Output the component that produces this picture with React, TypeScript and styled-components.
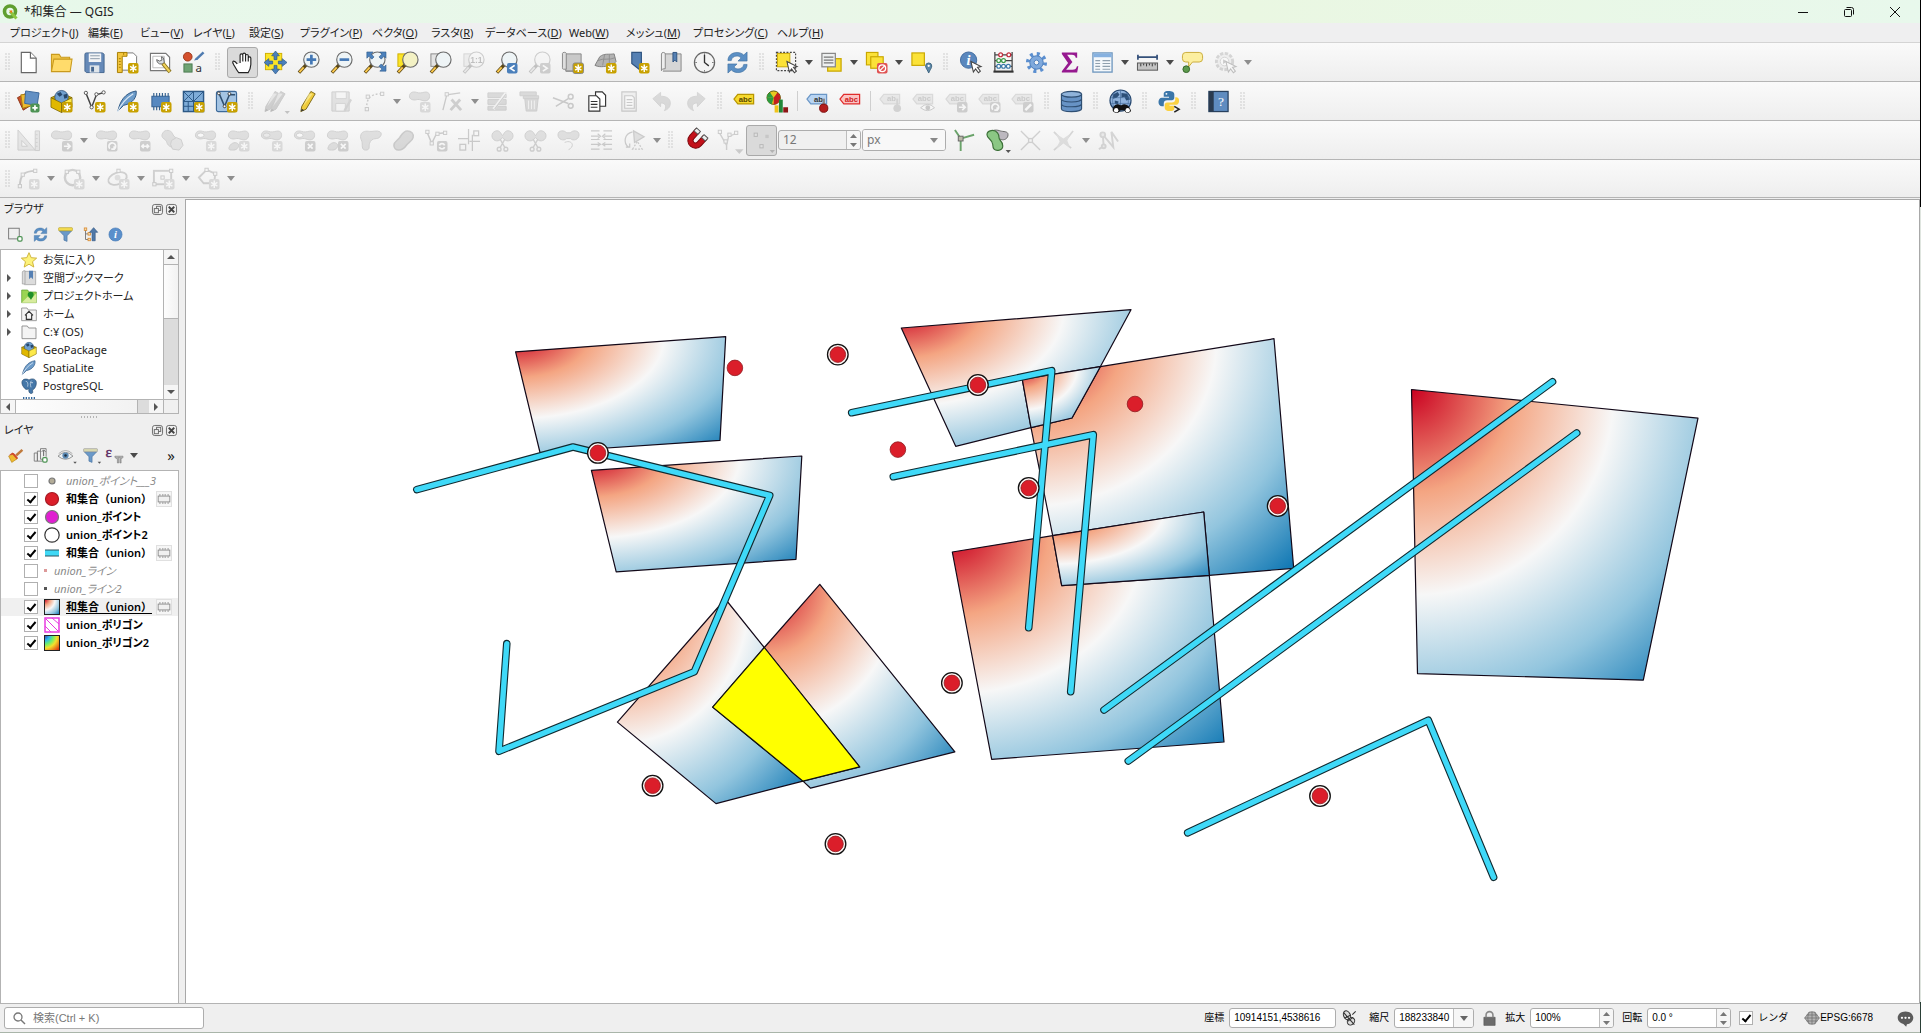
import React, { ReactNode } from "react";
import styled, { createGlobalStyle, css } from "styled-components";

const Global = createGlobalStyle`
  *, *::before, *::after { box-sizing: border-box; }
  body { margin: 0; overflow: hidden; }
  button, input, select { font: inherit; color: inherit; margin: 0; }
`;

/* ---------- icon building blocks ---------- */
const Svg = styled.svg`
  display: block;
  flex: none;
  overflow: visible;
`;

const blob = "M1.500 6C2 2 6 1.500 9 2.500s5 .5 8-.2S23 3 22.500 7s-4 5-7 4-4.500-1.500-7-.8S1 10 1.500 6z";
const Blob = ({ fill = "#a8a8a8" }: { fill?: string }) => <path d={blob} fill={fill} stroke="#777" strokeWidth="1" />;

const Star = () => (
  <g>
    <rect x="12.500" y="12.500" width="11" height="11" rx="2" fill="#c8a100" />
    <path d="M18 14.200v7.600M14.700 16.100l6.600 3.800M21.300 16.100l-6.600 3.800" stroke="#fff" strokeWidth="1.500" />
  </g>
);
const Badge = ({ fill = "#777", children }: { fill?: string; children: ReactNode }) => (
  <g>
    <rect x="12.500" y="12.500" width="11" height="11" rx="2" fill={fill} />
    <g stroke="#fff" strokeWidth="1.800" fill="none">{children}</g>
  </g>
);
const Lens = ({ fill = "#eef4f6" }: { fill?: string }) => (
  <g>
    <path d="M9.500 14.500L2 22.500" stroke="#5a4717" strokeWidth="3.600" />
    <path d="M7 17L2.500 22" stroke="#fbc94c" strokeWidth="2" />
    <circle cx="15" cy="9" r="8" fill={fill} stroke="#6b6b6b" strokeWidth="1.200" />
  </g>
);
const Mini = ({ x = 22.5 }: { x?: number }) => <path d={`M${x - 2.5} 22h5.500l-2.750 3z`} fill="#555" />;
const Cursor = () => <path d="M12.500 11l2.500 11 2.300-3.300 3 4 2-1.600-3-4 3.700-.900z" fill="#fff" stroke="#444" strokeWidth="1.100" />;
const Tag = ({ fill, stroke, text, ink }: { fill: string; stroke: string; text: string; ink: string }) => (
  <g>
    <path d="M1 9.500L5 4.500h16.500v10H5z" fill={fill} stroke={stroke} strokeWidth="1.300" />
    <text x="13" y="12" textAnchor="middle" fontSize="8" fontWeight="700" fontFamily="Liberation Sans, sans-serif" fill={ink}>{text}</text>
  </g>
);
const Scissors = () => (
  <g fill="none" stroke="#777" strokeWidth="1.400">
    <path d="M9.500 10.500l5 9M14.500 10.500l-5 9" />
    <circle cx="8.500" cy="21" r="2" /><circle cx="15.500" cy="21" r="2" />
  </g>
);
const Refresh = () => (
  <g fill="#5b8fc4" stroke="#36689b" strokeWidth=".6">
    <path d="M2 10c0-5 4-8.500 9.500-8.500 3 0 5.200 1 7 2.700L22 1v9.500h-9.500l3.200-3.200C14.500 6 13.200 5.300 11.500 5.300 8.300 5.300 6 7 5.500 10z" />
    <path d="M22 14c0 5-4 8.500-9.500 8.500-3 0-5.200-1-7-2.700L2 23v-9.500h9.500l-3.200 3.200c1.200 1.300 2.500 2 4.200 2 3.200 0 5.500-1.700 6-4.700z" />
  </g>
);
const Box = () => (
  <g stroke="#7a6400" strokeWidth=".8">
    <path d="M1 8l11-5 11 5-11 6z" fill="#c9a400" />
    <circle cx="12" cy="7.500" r="7" fill="#6f9fce" stroke="#274b75" />
    <path d="M7 4l4-2 2 3-3 2zM14 5l4-1v4l-3 1z" fill="#27476b" stroke="none" />
    <path d="M1 8l11 5.500V23.500L1 18z" fill="#e0b800" /><path d="M23 8l-11 5.500V23.500l11-5.500z" fill="#fde94a" />
  </g>
);
const Feather = () => (
  <g><path d="M2 22C4 12 9 3 21 1c1 6-3 13-13 15z" fill="#6c9bc9" stroke="#2f5883" strokeWidth="1" /><path d="M1.500 23C5 15 10 9 18 4" stroke="#dce9f5" fill="none" strokeWidth="1.200" /></g>
);
const Pencil = ({ fill = "#f0cc3c" }: { fill?: string }) => (
  <g><path d="M5 17L14.500 1.500l4.500 2.500L9.500 20 4 22.500z" fill={fill} stroke="#7d6a1c" strokeWidth="1" /><path d="M12 3.500L6.500 17l10-13z" fill="#fff3a8" opacity=".6" /><path d="M5 19.500l2.500 1.500L4 22.500z" fill="#333" /></g>
);
const Node = ({ x, y }: { x: number; y: number }) => <rect x={x - 1.7} y={y - 1.7} width="3.4" height="3.4" fill="#eee" stroke="#666" strokeWidth="1" />;
const Globe = ({ c = "#7ba5d3" }: { c?: string }) => (
  <g><circle cx="12" cy="11" r="11" fill={c} stroke="#26476f" strokeWidth="1.200" />
    <path d="M4 5l5-3 2 3-3 3-4 1zM13 3l6 1 3 6-4 1-2-4-3 1zM6 11l4 1-1 3-3-1z" fill="#2c4f78" />
    <path d="M2 8h20M2 14h20M12 0v22M6 2c-3 6-3 12 0 18M18 2c3 6 3 12 0 18" stroke="#3d6393" fill="none" strokeWidth=".6" /></g>
);

const icons: Record<string, ReactNode> = {
  new: <g fill="#fff" stroke="#666" strokeWidth="1.200"><path d="M4.500 1.500h9.500l6 6v15H4.500z" /><path d="M14 1.500v6h6" /></g>,
  open: <g stroke="#c99a1d" strokeWidth="1.100"><path d="M1.500 21V3.500h8l2 3h9V10" fill="#f2c84b" /><path d="M1.500 21.500L4 8.500h19l-2 13z" fill="#ffdb6b" /></g>,
  save: <g><path d="M2 3.500Q2 2 3.500 2h17L22 3.500v19H3.500L2 21z" fill="#6589b8" stroke="#45668f" /><rect x="6" y="2.500" width="13" height="9" fill="#f2f4f6" /><path d="M7.500 5h10M7.500 8h10" stroke="#8a99a8" /><rect x="7" y="15" width="10" height="7.500" fill="#dfe5ea" /><rect x="8.500" y="16.500" width="3" height="5" fill="#45668f" /></g>,
  layout: <g><path d="M5 2h13l3.500 3.500V20H5z" fill="#fff" stroke="#777" /><path d="M1.500 1.500h10v4h-5v17h-5z" fill="#f2c53d" stroke="#a67c00" /><path d="M3 8h2M3 11h2M3 14h2M3 17h2M8 2v2" stroke="#a67c00" /><Star /></g>,
  manager: <g><path d="M1.500 2.500h16l4 4v14h-20z" fill="#fff" stroke="#777" strokeWidth="1.200" /><path d="M4 5.500h12v12H4z" fill="none" stroke="#bbb" /><path d="M8 9a4.500 4.500 0 008 3l-1-5-2-1 .5 3.500-2.500 1z" fill="#d9dde0" stroke="#666" /><path d="M14.500 13l7.500 9" stroke="#8a7420" strokeWidth="4" /><path d="M15 13.500l6.500 8" stroke="#f1d35a" strokeWidth="2.200" /></g>,
  style: <g><circle cx="6" cy="6" r="4.500" fill="#d4502d" stroke="#9c3415" /><path d="M15 8.500l7.500-7" stroke="#4f7bb0" strokeWidth="2.600" /><path d="M12.500 10l4-1-2-2z" fill="#4f7bb0" /><rect x="2" y="13.500" width="8.500" height="8.500" fill="#6fa373" stroke="#4b7a50" /><text x="14" y="22" fontSize="12" fontFamily="Noto Sans, sans-serif" fill="#333">a</text></g>,
  pan: <path d="M6.500 13.500c-1.500-2-3-3.500-4.300-2.700-1 .700-.2 2 .5 3.200 1.500 2.700 3 6 5.300 8.500h10c1.500-2.500 2.500-5 2.700-8.500V7.500c0-1.800-2.700-1.800-2.700 0V5c0-1.800-2.800-1.800-2.800 0V3.500c0-1.800-2.900-1.800-2.900 0V4.500c0-1.900-2.800-1.900-2.800 0v8M12.300 4.500v6.500M15.200 4.500V11M18 6.500V11" fill="#fff" stroke="#222" strokeWidth="1.200" />,
  panSel: <g><rect x="1.500" y="2.500" width="17" height="17" fill="#fbe425" stroke="#cfae00" /><path d="M12 0l4 5h-2.500v4h-3V5H8zM12 24l4-5h-2.500v-4h-3v4H8zM0 12l5-4v2.500h4v3H5V16zM24 12l-5-4v2.500h-4v3h4V16z" fill="#4b80bb" stroke="#2b5788" strokeWidth=".7" /></g>,
  zoomIn: <g><Lens /><path d="M15 4v10M10 9h10" stroke="#4478b5" strokeWidth="2.800" /></g>,
  zoomOut: <g><Lens /><path d="M10 9h10" stroke="#4478b5" strokeWidth="2.800" /></g>,
  full: <g><Lens /><g fill="#4b80bb" stroke="#2b5788" strokeWidth=".6"><path d="M4 1h6.500L8.500 3.200l3 3-2.300 2.300-3-3L4 7.500zM24 1h-6.500l2.200 2.200-3 3 2.300 2.300 3-3 2 2zM24 21h-6.500l2.200-2.200-3-3 2.300-2.300 3 3 2-2z" /></g></g>,
  zoomSel: <g><rect x="2" y="3" width="13" height="13" fill="#fbe425" stroke="#cfae00" /><Lens fill="#f3f1c4" /></g>,
  zoomLayer: <g><rect x="2" y="3" width="13" height="13" fill="#e3e3e3" stroke="#888" /><Lens /></g>,
  native: <g><rect x="2" y="3" width="13" height="13" fill="#d8d8d8" stroke="#888" /><Lens /><text x="15" y="12.500" textAnchor="middle" fontSize="9" fontWeight="700" fontFamily="Liberation Sans, sans-serif" fill="#444">1:1</text></g>,
  last: <g><Lens /><Badge fill="#4b80bb"><path d="M20.500 15l-4.500 3 4.500 3" /></Badge></g>,
  next: <g><Lens /><Badge><path d="M15.500 15l4.500 3-4.500 3" /></Badge></g>,
  mapView: <g fill="#c9c9c9" stroke="#888"><path d="M5 3h16v18H5z" /><path d="M1.500 2.500c0-1.500 4-1.500 4 0V19H2.500c-1 0-1-1-1-2z" fill="#dedede" /><path d="M5 21h12" /><Star /></g>,
  view3d: <g><path d="M1 15L6 6c5-4 9-2 15-3l2 8-5 5c-6-1-10 2-17-1z" fill="#b3b3b3" stroke="#808080" /><path d="M4 10c6-3 12 0 18-3M11 4l-2 11M16 4v11" stroke="#909090" fill="none" /><Star /></g>,
  mark: <g><path d="M5 1.500h10V21l-5-4-5-4z" fill="#5580b3" stroke="#2e5380" strokeWidth="1.200" /><Star /></g>,
  marks: <g><path d="M5 3h17v18H3" fill="#d6d6d6" stroke="#888" /><path d="M1.500 3c0-2 4-2 4 0v15.500c-2 0-4 .5-4 2z" fill="#eee" stroke="#888" /><path d="M13.500 1.500h4v10l-2-2-2 2z" fill="#5580b3" stroke="#2e5380" /></g>,
  clock: <g fill="#f4f4f4" stroke="#666"><circle cx="12" cy="12" r="10.500" strokeWidth="1.300" /><path d="M12 4v8l4.500 3.500" fill="none" stroke="#333" strokeWidth="1.400" /><path d="M12 2.500v1.500M12 20v1.500M2.500 12H4M20 12h1.500" /></g>,
  refresh: <Refresh />,
  select: <g><rect x="1.500" y="1.500" width="20" height="19" fill="none" stroke="#444" strokeDasharray="2 1.500" strokeWidth="1.200" /><rect x="2.500" y="2.500" width="13" height="14" fill="#fbe238" stroke="#c9a700" /><Cursor /></g>,
  form: <g><rect x="8" y="8" width="14" height="13" fill="#fbe238" stroke="#c9a700" strokeWidth="1.300" /><rect x="2" y="2.500" width="14" height="14" fill="#eef0f0" stroke="#888" strokeWidth="1.300" /><path d="M4 6.500h10M4 9.500h10M4 12.500h10" stroke="#777" strokeWidth="1.300" /></g>,
  deselect: <g><rect x="1.500" y="1.500" width="12" height="13" fill="#fbe238" stroke="#c9a700" strokeWidth="1.200" /><rect x="6" y="6" width="13" height="12" fill="#fbe238" stroke="#c9a700" strokeWidth="1.200" /><rect x="12.500" y="12.500" width="11" height="11" rx="2" fill="#e05252" /><circle cx="18" cy="18" r="3.500" fill="none" stroke="#fff" strokeWidth="1.400" /><path d="M15.500 20.500l5-5" stroke="#fff" strokeWidth="1.400" /></g>,
  selLoc: <g><rect x="2" y="2" width="13" height="13" fill="#fbe238" stroke="#c9a700" strokeWidth="1.200" /><path d="M19.500 23c-1-3-3.200-5-3.200-7.300a3.200 3.200 0 016.400 0C22.700 18 20.500 20 19.500 23z" fill="#5e88a8" stroke="#3f6580" /><circle cx="19.500" cy="15.500" r="1.200" fill="#fff" /></g>,
  identify: <g><circle cx="10" cy="9.500" r="8.500" fill="#5a87bd" stroke="#416c9f" /><text x="10" y="14.500" textAnchor="middle" fontSize="15" fontStyle="italic" fontWeight="700" fontFamily="Liberation Serif, serif" fill="#fff">i</text><Cursor /></g>,
  abacus: <g fill="none" strokeWidth="1.300"><path d="M3 1v20M21 1v20M3 4h18M3 10h18M3 16h18" stroke="#444" /><path d="M1.500 21.500h21" stroke="#333" strokeWidth="2.200" /><g fill="#fff"><g stroke="#c02a3a"><circle cx="9" cy="4" r="2" /><circle cx="17.500" cy="4" r="2" /></g><g stroke="#3f9a4a"><circle cx="7" cy="10" r="2" /><circle cx="12" cy="10" r="2" /></g><g stroke="#3b78a8"><circle cx="7" cy="16" r="2" /><circle cx="12" cy="16" r="2" /><circle cx="17" cy="16" r="2" /></g></g></g>,
  gear: <g><circle cx="12" cy="12" r="9" fill="none" stroke="#5b8fd0" strokeWidth="4" strokeDasharray="3.100 3.970" /><circle cx="12" cy="12" r="7" fill="#7fa9dc" stroke="#4a7cbb" /><circle cx="12" cy="12" r="2.500" fill="#f4f4f4" stroke="#4a7cbb" /></g>,
  sigma: <path d="M4 1.500h16V7h-1.500c-.5-2.500-1.500-3.200-4-3.200H9.500L15 11.500 8.500 19.500H15c3 0 4-.8 4.800-3.500h1.400L20 22.500H4V21l6.500-8.500L4 3z" fill="#96198f" />,
  table: <g><rect x="2" y="2" width="20" height="20" fill="#f4f8fb" stroke="#6f97bf" strokeWidth="1.400" /><rect x="2.500" y="2.500" width="19" height="4" fill="#86b1e0" /><path d="M4.500 10h5M4.500 13h5M4.500 16h5M4.500 19h5M12 10h8M12 13h8M12 16h8M12 19h8" stroke="#8fa0ae" strokeWidth="1.200" /></g>,
  measure: <g><path d="M2 6.500h20M2 4v5M22 4v5" stroke="#34507a" strokeWidth="1.800" /><rect x="1.500" y="12.500" width="21" height="7.500" fill="#c3c3c3" stroke="#555" /><path d="M5 13v3M8 13v2M11 13v3M14 13v2M17 13v3M20 13v2" stroke="#333" /></g>,
  tips: <g><path d="M5 1.500h14q3.500 0 3.500 3.500v3q0 3.500-3.500 3.500h-7l-4 5v-5H5Q1.500 11.500 1.500 8V5q0-3.500 3.500-3.500z" fill="#fcefa0" stroke="#c9aa3a" /><circle cx="5.500" cy="19" r="3.500" fill="#5c9a4c" stroke="#35652a" /></g>,
  action: <g><circle cx="11" cy="11" r="8.500" fill="#ddd" stroke="#888" strokeWidth="3" strokeDasharray="3.500 1.500" /><circle cx="11" cy="11" r="4.500" fill="#fff" stroke="#888" /><path d="M9.500 8.500l4 2.500-4 2.500z" fill="#666" /><Cursor /></g>,
  source: <g><path d="M0.500 8l8-4 6 12-8 5z" fill="#c9502c" stroke="#8c3214" /><path d="M4 5l12-1 1 12-11 3z" fill="#eeb92f" stroke="#a87e10" /><path d="M9 1l14 2-2 13-13-2z" fill="#6290c4" stroke="#3a679c" /><rect x="14" y="14" width="9.500" height="9.500" rx="2" fill="#4d9354" /><path d="M18.750 16v5.500M16 18.750h5.500" stroke="#fff" strokeWidth="1.800" /></g>,
  gpkg: <g><Box /><Star /></g>,
  shp: <g><path d="M3 3l6 15 5-13 8-2.500" fill="none" stroke="#444" strokeWidth="1.500" /><g fill="#fff" stroke="#555"><circle cx="3" cy="3" r="1.700" /><circle cx="9" cy="18" r="1.700" /><circle cx="14" cy="4.500" r="1.700" /><circle cx="21.500" cy="2.500" r="1.700" /></g><Star /></g>,
  spatialite: <g><Feather /><Star /></g>,
  memory: <g><path d="M5 3v18M8 3v18M11 3v18M14 3v18M17 3v18M20 3v18" stroke="#36628f" strokeWidth="1.200" /><rect x="3" y="6.500" width="18" height="11" fill="#5688c0" stroke="#335f90" /><Star /></g>,
  mesh: <g><rect x="1.500" y="1.500" width="21" height="21" fill="#7eacd8" stroke="#2c5885" strokeWidth="1.500" /><path d="M12 1.500v21M1.500 12h21M1.500 1.500l10.500 10.500M12 1.500L1.500 12M22.500 1.500L12 12M6.500 12v10.500M1.500 17H12" stroke="#2c5885" fill="none" /><Star /></g>,
  gpx: <g><rect x="1.500" y="1.500" width="21" height="21" rx="2" fill="#a4c4e3" stroke="#3d6a9a" strokeWidth="1.200" /><path d="M4 3l6 14 5-12h6" fill="none" stroke="#2f4f70" strokeWidth="1.600" /><g fill="#fff" stroke="#444"><circle cx="4" cy="3.500" r="1.500" /><circle cx="10" cy="17" r="1.500" /><circle cx="15" cy="4" r="1.500" /></g><Star /></g>,
  edits: <g><g transform="translate(-3 0)"><Pencil fill="#777" /></g><g transform="translate(3 0)"><Pencil fill="#777" /></g><Mini x={24} /></g>,
  pencil: <Pencil />,
  saveEdit: <g><path d="M2 2h18v20H2z" fill="#b5b5b5" stroke="#777" /><path d="M6 2h11v7H6zM6 14h10v8H6z" fill="#f4f4f4" stroke="#888" /><path d="M14 21l7-12 2 1.500-7 12z" fill="#888" /></g>,
  digit: <g><path d="M4 20C3 9 8 4 19 4" fill="none" stroke="#666" strokeWidth="1.500" strokeDasharray="2 2" /><Node x={4} y={20} /><Node x={5} y={7} /><Node x={20} y={4} /></g>,
  addPoly: <g><Blob /><Star /></g>,
  vertex: <g><path d="M2 21L6 5l14-2" fill="none" stroke="#666" strokeWidth="1.400" /><Node x={6} y={4.5} /><path d="M10 21L20 10M11 10l10 11" stroke="#777" strokeWidth="3" /></g>,
  multi: <g><path d="M2 3h19v5H2zM2 10h19v5H2zM2 17h19v4H2z" fill="#999" stroke="#777" /><path d="M8 20L21 3" stroke="#eee" strokeWidth="3" /><path d="M9 20L21 4" stroke="#777" strokeWidth="1.200" /></g>,
  trash: <g fill="#b98f8b" stroke="#777"><path d="M1 2h17v4H1zM6 9h14l-1.500 13h-11z" /><path d="M4.500 6h16v3h-16z" /><path d="M10 11v9M13 11v9M16 11v9" stroke="#eee" /></g>,
  cut: <g fill="none" stroke="#666" strokeWidth="1.600"><path d="M1 8l16 6M4 17L17 9" /><circle cx="19.500" cy="7" r="2.500" /><circle cx="19.500" cy="16.500" r="2.500" /></g>,
  copy: <g fill="#fff" stroke="#333" strokeWidth="1.200"><path d="M11 2h7l3.500 3.500V17H11z" /><path d="M4 6h8l3.500 3.500V22H4z" /><path d="M6 12h7M6 15h7M6 18h7" /></g>,
  paste: <g fill="#ddd" stroke="#666" strokeWidth="1.200"><path d="M4 2h15v20H4z" /><path d="M7 6h8l2 2v11H7z" fill="#fff" /><path d="M9 10h6M9 13h6M9 16h6" /></g>,
  undo: <path d="M2 9l8-6.500v4c7 0 11 3 10 9-.5 3-3 5-6 6 2-3 2.500-8-4-8v4z" fill="#999" stroke="#888" />,
  redo: <path d="M22 9l-8-6.500v4c-7 0-11 3-10 9 .5 3 3 5 6 6-2-3-2.500-8 4-8v4z" fill="#999" stroke="#888" />,
  label: <Tag fill="#f6d92d" stroke="#b89600" text="abc" ink="#554400" />,
  diagram: <g><circle cx="8" cy="8" r="7" fill="#e8c820" stroke="#5c5400" /><path d="M8 8L1 8a7 7 0 005 6.800z" fill="#2c9a3f" /><path d="M8 8V15a7 7 0 007-7 7 7 0 00-3-5.500z" fill="#c41f1f" /><path d="M1 8a7 7 0 013-5.700L8 8z" fill="#2c9a3f" /><rect x="9" y="16" width="4" height="7.500" fill="#f0c419" /><rect x="13.500" y="10" width="4" height="13.500" fill="#22883a" /><rect x="18" y="18" width="5" height="5.500" fill="#8e1616" /></g>,
  labelPin: <g><Tag fill="#b8d4f2" stroke="#6a96c6" text="ab" ink="#333" /><path d="M18.500 9v7" stroke="#888" strokeWidth="2.500" /><circle cx="18.500" cy="19" r="4.300" fill="#b31d1d" stroke="#7d0f0f" /></g>,
  labelRed: <Tag fill="#fbc4c4" stroke="#e02c2c" text="abc" ink="#cf2020" />,
  labPin: <g><Tag fill="#c8c8c0" stroke="#999" text="ab" ink="#666" /><path d="M19 9v7" stroke="#888" strokeWidth="2" /><circle cx="19" cy="19" r="4" fill="#888" /></g>,
  labEye: <g><Tag fill="#c8c8c0" stroke="#999" text="abc" ink="#666" /><path d="M9 18.500q7.500-7 14.500 0-7.500 6-14.500 0z" fill="#fff" stroke="#666" /><circle cx="16.500" cy="18.500" r="2.500" fill="#666" /></g>,
  labMove: <g><Tag fill="#c8c8c0" stroke="#999" text="abc" ink="#666" /><Badge><path d="M14.500 18h6M18 15l3 3-3 3" /></Badge></g>,
  labRot: <g><Tag fill="#c8c8c0" stroke="#999" text="abc" ink="#666" /><Badge><path d="M15.500 20.500a3.500 3.500 0 114.500.5M20 18v3h-3" /></Badge></g>,
  labEdit: <g><Tag fill="#c8c8c0" stroke="#999" text="abc" ink="#666" /><Badge><path d="M15 21l6-6" strokeWidth="2.500" /></Badge></g>,
  db: <g fill="#6793c5" stroke="#2f4f73" strokeWidth="1.200"><path d="M1.500 4.500v15c0 4 21 4 21 0v-15z" /><ellipse cx="12" cy="4.500" rx="10.500" ry="3" fill="#8fb3da" /><path d="M1.500 9.500c0 4 21 4 21 0M1.500 14.500c0 4 21 4 21 0" fill="none" /></g>,
  meta: <g><Globe c="#8fb2dc" /><path d="M4 22c-1-5 4-9 8-6h1c4-3 9 1 10 6-2 3-6 2-7-1h-4c-1 3-6 4-8 1z" fill="#111" /><circle cx="7.500" cy="21" r="2.300" fill="#fff" /><circle cx="19.500" cy="21" r="2.300" fill="#fff" /></g>,
  python: <g><path d="M11 1c-5 0-5 2-5 3.500V7h5.500v1H4c-2 0-3.500 2-3.500 4.500S2 17 4 17h2v-3c0-2 1.500-3.200 3.500-3.200h5c1.500 0 2.500-1.200 2.500-2.600V4.500C17 2 14.500 1 11 1z" fill="#3b76a9" /><circle cx="8.800" cy="4" r="1" fill="#fff" /><path d="M12.500 22c5 0 4.500-2 4.500-4v-1.500h-5v-1h7c2 0 3-2 3-4.500S20.500 7.500 19 7.500h-1V10c0 2-1.500 3-3.500 3h-5C8 13 7 14 7 15.500v3C7 21 9 22 12.500 22z" fill="#fbd140" /><path d="M17 17l5 3-5 3" fill="none" stroke="#222" strokeWidth="1.600" /></g>,
  help: <g><rect x="2" y="1.500" width="20" height="21" fill="#5f8cc0" stroke="#27405e" strokeWidth="1.300" /><rect x="2" y="1.500" width="5" height="21" fill="#2a3b50" /><text x="14.500" y="17" textAnchor="middle" fontSize="14" fontFamily="Liberation Serif, serif" fill="#fff">?</text></g>,
  cad: <g fill="#c9c0b4" stroke="#777"><path d="M1 1l18 21H1zM5 12v6h6z" fillRule="evenodd" /><path d="M19 2h4.500v20.500H19z" /><path d="M19.500 6h2M19.500 10h2M19.500 14h2M19.500 18h2" /></g>,
  move: <g><Blob /><Badge><path d="M14.500 18h6M18 15l3 3-3 3" /></Badge></g>,
  rotate: <g><Blob /><Badge><path d="M15.500 20.500a3.500 3.500 0 114.500.5M20 18v3h-3" /></Badge></g>,
  scale: <g><Blob /><Badge><path d="M14.500 18h7M16.500 16l-2 2 2 2M19.500 16l2 2-2 2" /></Badge></g>,
  simplify: <g fill="#a8a8a8" stroke="#777"><path d="M2 4c2-4 9-3 10 1s6 4 6 8-5 8-9 5-2-5-5-7-4-4-2-7z" /><path d="M11 12l5-3 5 2 2 6-4 5-7-1-2-5z" fill="#bbb" /></g>,
  ring: <g><Blob /><ellipse cx="7" cy="6.500" rx="3.500" ry="2.300" fill="#fff" stroke="#777" /><Star /></g>,
  part: <g><Blob /><path d="M2 20c1-5 6-7 9-5s0 7-4 7-5 0-5-2z" fill="#a8a8a8" stroke="#777" /><Star /></g>,
  fillRing: <g><Blob /><ellipse cx="7" cy="6.500" rx="3.500" ry="2.300" fill="#ccc" stroke="#777" /><Star /></g>,
  delRing: <g><Blob /><ellipse cx="7" cy="6.500" rx="3.500" ry="2.300" fill="#fff" stroke="#777" /><Badge><path d="M15.500 15.500l5 5M20.500 15.500l-5 5" /></Badge></g>,
  delPart: <g><Blob /><path d="M2 20c1-5 6-7 9-5s0 7-4 7-5 0-5-2z" fill="#a8a8a8" stroke="#777" /><Badge><path d="M15.500 15.500l5 5M20.500 15.500l-5 5" /></Badge></g>,
  reshape: <path d="M2 6c1-4 6-4 9-3.500S19 1 22 3s0 7-4 7-6 2-7 5 1 7-4 7-3-6-4-9-2-4-1-7z" fill="#a8a8a8" stroke="#777" />,
  offset: <path d="M2 17c0-4 4-5 6-8s4-7 8-7 7 3 6 7-5 5-7 8-5 5-8 5-5-2-5-5z" fill="#999" stroke="#666" strokeWidth="1.600" />,
  reverse: <g><path d="M2 3l5 12 5-10 9-1" fill="none" stroke="#666" strokeWidth="1.500" /><Node x={2.500} y={3} /><Node x={7} y={15} /><Node x={13} y={5} /><Node x={21} y={4} /><Badge><path d="M15 17a3 3 0 015.500 0M20.500 19a3 3 0 01-5.500 0" /></Badge></g>,
  split: <g stroke="#666" strokeWidth="1.300" fill="none"><path d="M11 0v16M15 6v17M0 10h11M12 13h11" /><rect x="16.500" y="2" width="5" height="5" /><rect x="2" y="16" width="6" height="6" /></g>,
  splitF: <g><path d="M1 7c0-5 7-7 9-3l2 3 2-3c2-4 9-2 9 3s-6 7-9 4l-2-2-2 2c-3 3-9 1-9-4z" fill="#a8a8a8" stroke="#777" /><Scissors /></g>,
  splitP: <g><path d="M1 6c0-5 7-5 9-2h4c2-3 9-3 9 2s-6 7-9 4h-4c-3 3-9 1-9-4z" fill="#a8a8a8" stroke="#777" /><path d="M8 14c5-2 8 0 8 3s-4 4-4 5" fill="none" stroke="#777" /></g>,
  trim: <g stroke="#666" strokeWidth="1.200" fill="none"><path d="M1 2h22M1 7.500h22M1 11h22M1 16h22M1 21h22" strokeDasharray="9 4" /><path d="M8 5l3 2.500L8 10M16 5l-3 2.500 3 2.500M8 14l3 2-3 2M16 14l-3 2 3 2" /></g>,
  rotSym: <g fill="none" stroke="#666" strokeWidth="1.300"><path d="M10 3C1 5 0 15 6 19M3 19h4v-4" /><path d="M11 2l11 6-10 6z" fill="#aaa" /><path d="M10 21l5-8 5 8z" strokeDasharray="2 1.500" /></g>,
  magnet: <g transform="rotate(-42 12 12) rotate(84 12 12)"><path d="M4 3v9a8 8 0 0016 0V3h-5.500v9a2.500 2.500 0 01-5 0V3z" fill="#c3111a" stroke="#7d0a10" /><path d="M4 1.500h5.500V5.500H4zM14.500 1.500H20V5.500h-5.500z" fill="#eee" stroke="#555" /></g>,
  snapV: <g fill="none" stroke="#777" strokeWidth="1.500"><path d="M2 3l8 14 2-9 9-4M10 17v5" /><Node x={3} y={3} /><Node x={9} y={13} /><Node x={13} y={6} /><Node x={20} y={4} /><Mini x={23} /></g>,
  snapN: <g><Node x={6} y={6} /><rect x="16" y="6" width="3.500" height="3.500" fill="#999" /><Node x={12} y={18} /><Mini x={23} /></g>,
  topo: <g fill="none" stroke="#6aa36a" strokeWidth="2"><path d="M8 10L2 1M8 10l14-4M8 10v13" /><rect x="5.500" y="7.500" width="5" height="5" fill="#b9b9a6" stroke="#666" strokeWidth="1" /></g>,
  overlap: <g><path d="M5 4C7 0 12 1 15 2s8 0 8 4-4 6-7 5-11-3-11-7z" fill="#bcb8bf" stroke="#666" /><path d="M1 6c0-5 8-6 11-2s0 5 3 8 4 9-1 10-7-1-7-6-6-6-6-10z" fill="#8bc784" stroke="#3c7038" strokeWidth="1.200" /><Mini x={23} /></g>,
  cross: <g fill="none" stroke="#777" strokeWidth="1.400"><path d="M2 2l20 20M22 2L2 22" /><rect x="10" y="10" width="4" height="4" fill="#eee" /></g>,
  self: <g><path d="M2 3l8 8M22 2l-7 9M2 22l8-7M14 15l6 5" stroke="#888" strokeWidth="1.800" /><path d="M4 5l8 5 7-5-3 7 3 8-7-5-8 6 4-8z" fill="#aba898" /></g>,
  trace: <g fill="none" stroke="#888" strokeWidth="2"><path d="M2 21l5-3-1-12 11 13L15 3l7 10" /><circle cx="6" cy="6" r="2.500" fill="#ccc" /><circle cx="7" cy="18" r="2" fill="#ccc" /></g>,
  arc: <g><path d="M3 20C3 8 8 4 19 4" fill="none" stroke="#666" strokeWidth="2" /><Node x={3} y={20} /><Node x={6} y={8} /><Node x={19} y={4} /><Star /></g>,
  circle: <g><circle cx="11" cy="11" r="8" fill="none" stroke="#777" strokeWidth="2.500" /><Node x={5} y={5} /><Node x={17} y={5} /><Star /></g>,
  ellipse: <g><ellipse cx="11" cy="12" rx="10" ry="6" fill="none" stroke="#777" strokeWidth="2" transform="rotate(-20 11 12)" /><circle cx="11" cy="11" r="3" fill="#aaa" /><Node x={12} y={4} /><Star /></g>,
  rect: <g><rect x="2" y="4" width="18" height="14" fill="none" stroke="#777" strokeWidth="2" /><Node x={2.500} y={18} /><Node x={20} y={4} /><Node x={11} y={11} /><Star /></g>,
  polygon: <g><path d="M2 11L10 3l9 4-1 10H7z" fill="none" stroke="#777" strokeWidth="2" /><Node x={10} y={3} /><Node x={19} y={7} /><Star /></g>,
  addLayer: <g><rect x="1" y="2" width="17" height="17" fill="none" stroke="#777" strokeWidth="1.500" /><rect x="15.500" y="15.500" width="7" height="7" rx="2" fill="#fff" stroke="#4d9354" strokeWidth="2" /></g>,
  filter: <g><path d="M2 6h20l-7.500 8v9l-5-2v-7z" fill="#6b99c9" stroke="#47729f" /><rect x="1" y="1" width="22" height="5" rx="1" fill="#f4dc50" stroke="#b79f22" /></g>,
  filterMini: <g><path d="M2 6h20l-7.500 8v9l-5-2v-7z" fill="#6b99c9" stroke="#47729f" /><rect x="1" y="1" width="22" height="5" rx="1" fill="#d9d9b0" stroke="#999" /><Mini x={26} /></g>,
  collapse: <g><path d="M4 3v17h6M4 11h6" fill="none" stroke="#777" strokeWidth="1.500" /><g fill="#f7d7a8" stroke="#d68526" strokeWidth="1.200"><rect x="2" y="1.500" width="4" height="4" /><rect x="8" y="9" width="4" height="4" /><rect x="8" y="18" width="4" height="4" /></g><path d="M17 1l6.500 7.500h-4V22h-5V8.500h-4z" fill="#5079a8" stroke="#2f5380" /></g>,
  info: <g><circle cx="12" cy="12" r="10.500" fill="#5a8fcb" stroke="#457ab5" /><text x="12" y="18" textAnchor="middle" fontSize="17" fontStyle="italic" fontWeight="700" fontFamily="Liberation Serif, serif" fill="#fff">i</text></g>,
  star: <path d="M12 1l3.300 7.500 8.200.7-6.200 5.400 1.900 8L12 18.300 4.800 22.600l1.900-8L.5 9.200l8.200-.7z" fill="#fdf27b" stroke="#c9ab2a" strokeWidth="1.300" />,
  marksTree: <g><path d="M2 3q0-2 4-2v20H2zM6 2h16v20H5" fill="#dcdcdc" stroke="#999" /><path d="M12 1h6v13l-3-3-3 3z" fill="#5580b3" /></g>,
  projHome: <g><path d="M1 3h9l2 3h11v16H1z" fill="#9bd452" stroke="#5c9a2c" /><path d="M1 22l9-9 5 4 8-9v14z" fill="#d8ec9e" /><path d="M15 18c-1-4-5-5-5-8a4.500 4.500 0 019 0c0 3-3 4-4 8z" fill="#1f8f2a" /></g>,
  home: <g fill="#f4f4f4" stroke="#888" strokeWidth="1.200"><path d="M1 3h8l2 3h12v16H1z" /><path d="M6 14l6-6 6 6M8 13v7h8v-7" fill="none" stroke="#333" strokeWidth="1.700" /></g>,
  folder: <path d="M1.500 3h8l2 3h11v16h-21z" fill="#f4f4f4" stroke="#888" strokeWidth="1.300" />,
  box: <Box />,
  feather: <Feather />,
  pg: <g><path d="M2 4c3-4 9-2 10-1 4-3 11-2 11 4 0 5-2 8-4 10-1 0-2 1-1.500 3S17 24 14 23s-2-6-2.500-7C9 18 7 17 6 16 3 13 0 8 2 4z" fill="#4577a8" stroke="#274b70" /><path d="M7 5c3 0 4 3 3 8M16 4c-3 2-2 6-1 10" stroke="#dce8f2" fill="none" /><circle cx="16.500" cy="7" r="1" fill="#fff" /></g>,
  stipple: <path d="M3 3h18M3 8h18" stroke="#33689c" strokeWidth="3" strokeDasharray="2 2" />,
  brush: <g><path d="M1 13l8-4 6 8-9 6z" fill="#f0bb2f" stroke="#b4831a" /><path d="M1 12l6-5 3 3z" fill="#d04a2a" /><path d="M13 12L23 3" stroke="#c07a3c" strokeWidth="4" /><path d="M8 9l7 8" stroke="#d04a2a" strokeWidth="3" /></g>,
  group: <g fill="none" stroke="#777" strokeWidth="1.400"><path d="M2 8h5v13H2zM7 5h5M7 5v16h8M12 1h9v13M12 1v17h4" /><path d="M14 6l3-3 3 3M17 4v9" stroke="#555" /><rect x="15.500" y="15.500" width="7" height="7" rx="2" fill="#fff" stroke="#4d9354" strokeWidth="2" /></g>,
  eye: <g><path d="M0 13Q12 1 24 13 12 23 0 13z" fill="#eef2f4" stroke="#888" strokeWidth="1.400" /><circle cx="12" cy="12" r="5" fill="#5c8ab5" /><circle cx="12" cy="12" r="2" fill="#1e2f40" /><path d="M1 9Q12-1 23 9" fill="none" stroke="#888" /><Mini x={27} /></g>,
  epsilon: <g><text x="-4" y="14" fontSize="24" fontFamily="Liberation Serif, serif" fill="#5d2b62" stroke="#5d2b62" strokeWidth=".7">ε</text><path d="M11 13h13v2l-3 3v6h-2v-9h-2v9h-2v-6l-4-3z" fill="#aaa" stroke="#777" strokeWidth=".8" /></g>,
  chip: <g stroke="#888" strokeWidth="1.500"><rect x="2" y="7" width="20" height="10" fill="#f0f0f0" /><path d="M5 3.500v3M10 3.500v3M14 3.500v3M19 3.500v3M5 17.500v3M10 17.500v3M14 17.500v3M19 17.500v3" /></g>,
  mouse: <g fill="#ddd" stroke="#333" strokeWidth="1.600"><ellipse cx="9" cy="8" rx="5" ry="7" transform="rotate(-25 9 8)" /><ellipse cx="15" cy="17" rx="6" ry="5" transform="rotate(-45 15 17)" /><path d="M4 4l16 18M6 12l8-4M17 7l5-5M10 17l8-6" fill="none" /></g>,
  lock: <g fill="#6b6b6b" stroke="#555"><path d="M3 10h18v13H3z" /><path d="M6.500 10V6.500a5.500 5.500 0 0111 0V10" fill="none" strokeWidth="2.500" stroke="#888" /></g>,
  crs: <g fill="none" stroke="#777" strokeWidth="1.300"><path d="M1 12L8 3h8l7 9-7 9H8z" fill="#b5b5b5" /><path d="M1 12h22M4 7.500h16M4 16.500h16M12 2v20M8 3c-3 6-3 12 0 18M16 3c3 6 3 12 0 18" /></g>,
  bubble: <g><path d="M12 2c6.500 0 11 4 11 9s-4.500 9-9 9l-1 3.500L9 19.600C4 18.500 1 15 1 11c0-5 4.500-9 11-9z" fill="#5c5c5c" /><g fill="#fff"><circle cx="7" cy="11" r="1.600" /><circle cx="12" cy="11" r="1.600" /><circle cx="17" cy="11" r="1.600" /></g></g>,
};

const Icon = ({ name, size = 24 }: { name: string; size?: number }) => (
  <Svg width={size} height={size} viewBox="0 0 24 24" aria-hidden="true">{icons[name]}</Svg>
);

/* ---------- window frame ---------- */
const Screen = styled.div`
  display: grid;
  grid-template-columns: minmax(0, 1fr) 1px;
  height: 100vh;
  background: #efefef;
  color: #222;
  font: 12px/18px "Noto Sans", "Noto Sans CJK JP", sans-serif;
  font-feature-settings: "palt";
`;
const Frame = styled.div`
  display: flex;
  flex-direction: column;
  min-width: 0;
  min-height: 0;
  border-bottom: 1px solid #a9b5a9;
`;
const ScreenEdge = styled.div`
  background: linear-gradient(#000 0 20%, #dfe5df 20% 97%, #2a3f36 97%);
`;
const TitleBar = styled.header`
  display: flex;
  align-items: center;
  height: 23px;
  padding: 0 2px;
  background: linear-gradient(90deg, #e7f8ea 0%, #e9f7e9 40%, #eaf7e2 65%, #e8f8ec 100%);
`;
const WindowTitle = styled.h1`
  flex: 1;
  margin: 0 6px;
  font-size: 12px;
  font-weight: 400;
`;
const WindowButton = styled.button`
  display: grid;
  place-items: center;
  width: 46px;
  height: 20px;
  padding: 0;
  border: 0;
  background: none;
`;
const MenuBar = styled.nav`
  display: flex;
  align-items: center;
  height: 20px;
  padding-left: 2px;
  border-bottom: 1px solid #d4d4d4;
  background: #efeff0;
`;
const MenuItem = styled.button<{ $w: number }>`
  width: ${(p) => p.$w}px;
  padding: 0 8px;
  border: 0;
  background: none;
  font-size: 11px;
  line-height: 18px;
  text-align: left;
  white-space: nowrap;
`;

/* ---------- tool bars ---------- */
const ToolRow = styled.div.attrs({ role: "toolbar" })<{ $last?: boolean }>`
  display: flex;
  align-items: center;
  height: ${(p) => (p.$last ? 38 : 39)}px;
  padding-right: 8px;
  border-bottom: 1px solid #b5b5b5;
  background: linear-gradient(#fafafa, #eeeeee);
`;
const Grip = styled.span<{ $first?: boolean }>`
  flex: none;
  width: ${(p) => (p.$first ? 12 : 16)}px;
  height: 18px;
  padding: 0 ${(p) => (p.$first ? 1 : 5)}px 0 5px;
  background: radial-gradient(circle at 1px 1px, #b4b4b4, transparent 1px) 0 0 / 3px 3px repeat content-box content-box;
`;
const Divider = styled.span`
  width: 1px;
  height: 20px;
  margin: 0 3px;
  background: #cfcfcf;
`;
const ToolButton = styled.button<{ $on?: boolean; $menu?: boolean }>`
  display: flex;
  align-items: center;
  flex: none;
  height: 31px;
  margin: 0 1px;
  padding: 0 ${(p) => (p.$menu ? 0 : 3)}px 0 3px;
  border: 1px solid transparent;
  border-radius: 3px;
  background: none;
  gap: 7px;
  ${(p) => p.$on && css`border-color: #a9a9a9; background: #dadada;`}
  &:disabled svg { filter: grayscale(1) opacity(0.3); }
  &:disabled svg + svg { filter: opacity(0.6); }
`;
const Caret = ({ c = "#4a4a4a" }: { c?: string }) => (
  <Svg width="8" height="5" viewBox="0 0 8 5" aria-hidden="true"><path d="M0 0h8L4 5z" fill={c} /></Svg>
);

type Tool = { i: string; t: string; menu?: boolean; off?: boolean; on?: boolean } | "grip" | "line";
const on = (i: string, t: string, menu?: boolean): Tool => ({ i, t, menu });
const off = (i: string, t: string, menu?: boolean): Tool => ({ i, t, menu, off: true });

const Tools = ({ items }: { items: Tool[] }) => (
  <>
    {items.map((it, n) =>
      it === "grip" ? <Grip key={n} $first={n === 0} /> :
      it === "line" ? <Divider key={n} /> : (
        <ToolButton key={n} aria-label={it.t} disabled={it.off} $on={it.on} $menu={it.menu}>
          <Icon name={it.i} size={23} />
          {it.menu && <Caret />}
        </ToolButton>
      ))}
  </>
);

const fileTools: Tool[] = [
  "grip", on("new", "新規"), on("open", "開く"), on("save", "保存"), on("layout", "新規レイアウト"), on("manager", "レイアウトマネージャ"), on("style", "スタイルマネージャ"),
  "grip", { i: "pan", t: "地図を移動", on: true }, on("panSel", "選択部分に移動"), on("zoomIn", "拡大"), on("zoomOut", "縮小"), on("full", "全域表示"), on("zoomSel", "選択部分にズーム"), on("zoomLayer", "レイヤにズーム"), off("native", "ネイティブ解像度"), on("last", "前の表示"), off("next", "次の表示"), on("mapView", "新規地図ビュー"), on("view3d", "新規3D地図ビュー"), on("mark", "新規ブックマーク"), on("marks", "ブックマーク"), on("clock", "時系列コントローラ"), on("refresh", "再描画"),
  "grip", on("select", "地物を選択", true), on("form", "値で選択", true), on("deselect", "選択解除", true), on("selLoc", "場所で選択"),
  "grip", on("identify", "地物情報"), on("abacus", "フィールド計算機"), on("gear", "ツールボックス"), on("sigma", "統計"), on("table", "属性テーブル", true), on("measure", "線の長さを測る", true), on("tips", "地図のヒント"), off("action", "アクション", true),
];
const layerTools: Tool[] = [
  "grip", on("source", "データソースマネージャ"), on("gpkg", "新規GeoPackageレイヤ"), on("shp", "新規シェープファイル"), on("spatialite", "新規SpatiaLiteレイヤ"), on("memory", "新規一時レイヤ"), on("mesh", "新規メッシュレイヤ"), on("gpx", "新規GPXレイヤ"),
  "grip", off("edits", "現在の編集"), on("pencil", "編集モード切替"), off("saveEdit", "編集内容を保存"), off("digit", "線分でデジタイズ", true), off("addPoly", "ポリゴン地物を追加"), off("vertex", "頂点ツール", true), off("multi", "属性を一括変更"), off("trash", "削除"), off("cut", "切り取り"), on("copy", "コピー"), off("paste", "貼り付け"), off("undo", "元に戻す"), off("redo", "やり直す"),
  "grip", on("label", "ラベル"), on("diagram", "ダイアグラム"), "line", on("labelPin", "固定ラベル"), on("labelRed", "未配置ラベル"), "line", off("labPin", "ラベルを固定"), off("labEye", "ラベル表示"), off("labMove", "ラベル移動"), off("labRot", "ラベル回転"), off("labEdit", "ラベル変更"),
  "grip", on("db", "DBマネージャ"), "grip", on("meta", "MetaSearch"), "grip", on("python", "Pythonコンソール"), "grip", on("help", "ヘルプ"), "grip",
];
const editTools: Tool[] = [
  "grip", off("cad", "高度なデジタイズ"), off("move", "地物を移動", true), off("rotate", "地物を回転"), off("scale", "地物を拡大縮小"), off("simplify", "簡素化"), off("ring", "リングを追加"), off("part", "部分を追加"), off("fillRing", "リングを塗りつぶす"), off("delRing", "リングを削除"), off("delPart", "部分を削除"), off("reshape", "変形"), off("offset", "オフセット"), off("reverse", "線を反転"), off("split", "延長"), off("splitF", "地物を分割"), off("splitF", "部分を分割"), off("splitP", "地物を結合"), off("trim", "属性を結合"), off("rotSym", "点記号を回転", true),
  "grip", on("magnet", "スナップ"), off("snapV", "スナップ対象"), { i: "snapN", t: "スナップ種別", off: true, on: true },
];
const snapTools: Tool[] = [on("topo", "トポロジ編集"), on("overlap", "重なり"), off("cross", "交差点スナップ"), off("self", "セルフスナップ", true), off("trace", "トレース")];
const shapeTools: Tool[] = ["grip", off("arc", "円弧", true), off("circle", "円", true), off("ellipse", "楕円", true), off("rect", "長方形", true), off("polygon", "正多角形", true)];

/* ---------- fields ---------- */
const Field = styled.span<{ $w: number; $h?: number; $off?: boolean }>`
  position: relative;
  display: flex;
  flex: none;
  width: ${(p) => p.$w}px;
  height: ${(p) => p.$h ?? 20}px;
  border: 1px solid #adadad;
  border-radius: 3px;
  background: ${(p) => (p.$off ? "#f0f0f0" : "#fff")};
  color: ${(p) => (p.$off ? "#777" : "#000")};
  overflow: hidden;
`;
const SnapFields = styled.div`
  display: flex;
  align-items: center;
  gap: 1px;
  margin-right: 2px;
`;
const TextInput = styled.input`
  flex: 1;
  min-width: 0;
  width: 0;
  padding: 0 0 0 4px;
  border: 0;
  outline: 0;
  background: none;
  appearance: textfield;
  &::-webkit-inner-spin-button { display: none; }
  &::placeholder { color: #777; opacity: 1; }
`;
const Select = styled.select`
  flex: 1;
  padding: 0 4px;
  border: 0;
  background: #f8f8f8;
  appearance: none;
  opacity: 1;
`;
const SelectArrow = styled.span`
  position: absolute;
  right: 7px;
  top: 8px;
  pointer-events: none;
`;
const Stepper = styled.span`
  display: grid;
  width: 14px;
  border-left: 1px solid #bdbdbd;
`;
const StepButton = styled.button`
  display: grid;
  place-items: center;
  min-height: 0;
  padding: 0;
  border: 0;
  background: #f6f6f6;
`;
const DropButton = styled(StepButton)`
  width: 20px;
  border-left: 1px solid #bdbdbd;
`;
const Steps = () => (
  <Stepper>
    <StepButton aria-label="増やす"><Svg width="7" height="4" viewBox="0 0 7 4"><path d="M0 4h7L3.500 0z" fill="#777" /></Svg></StepButton>
    <StepButton aria-label="減らす"><Svg width="7" height="4" viewBox="0 0 7 4"><path d="M0 0h7L3.500 4z" fill="#777" /></Svg></StepButton>
  </Stepper>
);
const Check = styled.input.attrs({ type: "checkbox" })`
  appearance: none;
  flex: none;
  display: grid;
  place-items: center;
  width: 14px;
  height: 14px;
  border: 1px solid #b0b0b0;
  background: #fff;
  &:checked::after {
    content: "";
    width: 5px;
    height: 9px;
    margin-top: -2px;
    border: solid #000;
    border-width: 0 2px 2px 0;
    transform: rotate(40deg);
  }
`;

/* ---------- docks ---------- */
const Main = styled.main`
  display: grid;
  grid-template-columns: 185px minmax(0, 1fr);
  flex: 1;
  min-height: 0;
  padding-top: 1px;
`;
const Side = styled.aside`
  display: flex;
  flex-direction: column;
  min-height: 0;
  padding-right: 6px;
`;
const DockTitle = styled.div`
  display: flex;
  align-items: center;
  gap: 1px;
  height: 20px;
  padding: 0 1px 0 4px;
  h2 { flex: 1; margin: 0; font-size: 11px; line-height: 18px; font-weight: 400; }
`;
const DockButton = styled.button`
  display: grid;
  place-items: center;
  width: 13px;
  height: 13px;
  padding: 0;
  border: 0;
  background: none;
`;
const DockTools = styled.div`
  display: flex;
  align-items: center;
  height: 30px;
  padding-left: 3px;
`;
const SmallTool = styled.button<{ $wide?: boolean }>`
  display: flex;
  align-items: center;
  justify-content: center;
  gap: 7px;
  width: ${(p) => (p.$wide ? 40 : 25)}px;
  height: 24px;
  padding: 0;
  border: 0;
  background: none;
`;
const More = styled.button`
  margin-left: auto;
  padding: 0 4px;
  border: 0;
  background: none;
  font-size: 15px;
`;
const Browser = styled.div`
  display: grid;
  grid-template: minmax(0, 1fr) 14px / minmax(0, 1fr) 15px;
  height: 165px;
  border: 1px solid #b3b3b3;
  background: #fff;
`;
const List = styled.ul`
  margin: 0;
  padding: 1px 0 0;
  list-style: none;
  overflow: hidden;
  font-size: 11px;
`;
const Item = styled.li`
  display: flex;
  align-items: center;
  height: 18px;
  padding-left: 6px;
  white-space: nowrap;
  svg + svg { margin: 0 6px; }
`;
const Bar = styled.div<{ $dir: "row" | "column" }>`
  display: flex;
  flex-direction: ${(p) => p.$dir};
  background: #dcdcdc;
  ${(p) => (p.$dir === "row" ? css`border-top: 1px solid #b3b3b3;` : css`border-left: 1px solid #b3b3b3;`)}
`;
const BarButton = styled.button`
  display: grid;
  place-items: center;
  flex: 0 0 14px;
  padding: 0;
  border: 0;
  background: #f5f5f5;
`;
const Thumb = styled.div<{ $grow: number }>`
  flex: ${(p) => p.$grow};
  border: solid #b3b3b3;
  border-width: ${(p) => (p.$grow > 100 ? "0 1px" : "1px 0")};
  background: linear-gradient(90deg, #fdfdfd, #f2f2f2);
`;
const Rest = styled.div<{ $grow: number }>`
  flex: ${(p) => p.$grow};
`;
const Corner = styled.div`
  border: solid #b3b3b3;
  border-width: 1px 0 0 1px;
  background: #f0f0f0;
`;
const Splitter = styled.div`
  width: 18px;
  height: 2px;
  margin: 2px auto;
  background: repeating-linear-gradient(90deg, #b4b4b4 0 1px, transparent 1px 3px);
`;
const Layers = styled.div`
  flex: 1;
  min-height: 0;
  border: solid #b3b3b3;
  border-width: 1px 1px 0;
  background: #fff;
`;
const LayerRow = styled.li<{ $off?: boolean; $current?: boolean; $full?: boolean }>`
  display: flex;
  align-items: center;
  height: 18px;
  padding: 0 6px 0 23px;
  background: ${(p) => (p.$current ? "#f0f0f0" : "transparent")};
  white-space: nowrap;
  font-feature-settings: ${(p) => (p.$full ? "normal" : '"palt"')};
  label {
    display: flex;
    align-items: center;
    flex: 1;
    gap: 6px;
    min-width: 0;
    padding-left: 6px;
    color: ${(p) => (p.$off ? "#8a8a8a" : "#000")};
    font-style: ${(p) => (p.$off ? "italic" : "normal")};
    font-weight: ${(p) => (p.$off ? 400 : 600)};
    text-decoration: ${(p) => (p.$current ? "underline" : "none")};
    text-underline-offset: 2px;
  }
`;
const Chip = styled.button`
  padding: 0;
  border: 1px solid #e0e0e0;
  background: #f6f6f6;
`;

const Tri = ({ d }: { d: string }) => <Svg width="8" height="8" viewBox="0 0 8 8" aria-hidden="true"><path d={d} fill="#555" /></Svg>;
const places: [string, string, boolean][] = [
  ["star", "お気に入り", false], ["marksTree", "空間ブックマーク", true], ["projHome", "プロジェクトホーム", true], ["home", "ホーム", true],
  ["folder", "C:¥ (OS)", true], ["box", "GeoPackage", false], ["feather", "SpatiaLite", false], ["pg", "PostgreSQL", false], ["stipple", "", false],
];

const Swatch = ({ kind }: { kind: string }) => {
  const dot = (r: number, fill: string, stroke: string) => <circle cx="8" cy="8" r={r} fill={fill} stroke={stroke} strokeWidth="1.2" />;
  const w = kind === "tiny" || kind === "tinyDark" ? 4 : 16;
  return (
    <Svg width={w} height="16" viewBox={`0 0 ${w} 16`} aria-hidden="true">
      {kind === "grey" && dot(3, "#b3ac98", "#777")}
      {kind === "red" && dot(6.5, "#db1e2a", "#a51a22")}
      {kind === "magenta" && dot(6.5, "#e01fd1", "#777")}
      {kind === "ring" && dot(7.2, "#fff", "#333")}
      {kind === "line" && <g><path d="M1 5h14v6H1z" fill="#3fd8f5" /><path d="M1 5h14M1 11h14" stroke="#2f5560" /></g>}
      {kind === "tiny" && <rect x="0" y="6" width="3" height="3" fill="#d99" />}
      {kind === "tinyDark" && <rect x="0" y="6" width="3" height="3" fill="#555" />}
      {kind === "ramp" && <rect x=".5" y=".5" width="15" height="15" fill="url(#rdbu)" stroke="#222" />}
      {kind === "hatch" && <g stroke="#e83be0"><rect x="1" y="1" width="14" height="14" fill="#fff" strokeWidth="1.500" /><path d="M2 2l12 12M8 1l7 6M1 9l6 6" /></g>}
      {kind === "rainbow" && <rect x=".5" y=".5" width="15" height="15" fill="url(#spectrum)" stroke="#222" />}
    </Svg>
  );
};
const layers: { kind: string; name: string; off?: boolean; chip?: boolean; current?: boolean }[] = [
  { kind: "grey", name: "union_ポイント___3", off: true },
  { kind: "red", name: "和集合（union）", chip: true },
  { kind: "magenta", name: "union_ポイント" },
  { kind: "ring", name: "union_ポイント2" },
  { kind: "line", name: "和集合（union）", chip: true },
  { kind: "tiny", name: "union_ライン", off: true },
  { kind: "tinyDark", name: "union_ライン2", off: true },
  { kind: "ramp", name: "和集合（union）", chip: true, current: true },
  { kind: "hatch", name: "union_ポリゴン" },
  { kind: "rainbow", name: "union_ポリゴン2" },
];

const DockHead = ({ title }: { title: string }) => (
  <DockTitle>
    <h2>{title}</h2>
    <DockButton aria-label="フロート"><Svg width="11" height="11" viewBox="0 0 12 12"><g fill="none" stroke="#666"><rect x=".5" y=".5" width="11" height="11" rx="2.500" /><rect x="5" y="2.500" width="4.500" height="4.500" /><rect x="2.500" y="5" width="4.500" height="4.500" fill="#efefef" /></g></Svg></DockButton>
    <DockButton aria-label="閉じる"><Svg width="11" height="11" viewBox="0 0 12 12"><rect x=".5" y=".5" width="11" height="11" rx="2.500" fill="none" stroke="#666" /><path d="M3 3l6 6M9 3L3 9" stroke="#444" strokeWidth="2" /></Svg></DockButton>
  </DockTitle>
);

/* ---------- map ---------- */
const Canvas = styled.section`
  min-width: 0;
  min-height: 0;
  border: solid #a8a8a8;
  border-width: 1px 1px 0 1px;
  background: #fff;
  svg { width: 100%; height: 100%; overflow: hidden; }
`;
const polygons = [
  "515.6,351.8 725.7,336.6 720,440.4 540,452.5",
  "591.4,470.4 801.8,456 796,559.3 616.2,571.8",
  "725.3,599 764.3,647.5 712.7,707.1 803,781.1 716,803.6 617.4,722.1",
  "819.8,584.3 954.9,751.8 810.6,788.2 803,781.1 859.6,766.8 764.3,647.5",
  "901.3,328 1131,309.7 1100.3,366.7 1022.3,379.3 1031,427.7 955.7,446.3",
  "1100.3,366.7 1274,338.7 1293.7,568.3 1209.3,575.3 1203.7,512 1052.7,535.7 1031,427.7 1072,418",
  "952.3,552 1052.7,535.7 1061.7,585.7 1209.3,575.3 1224,742 991.7,759.3",
  "1022.3,379.3 1100.3,366.7 1072,418 1031,427.7",
  "1052.7,535.7 1203.7,512 1209.3,575.3 1061.7,585.7",
  "1411.5,389.5 1698,418.2 1643.3,680.2 1417.500,673.6",
];
const lines = [
  "416.8,489.6 573,447 769.7,495.4 694.3,671.8 499,751.2 506.8,643.6",
  "851.7,412.7 1051.7,370.7 1028.7,627.7",
  "893.3,476.7 1093.3,434.7 1070.7,691.7",
  "1104,710 1552.5,381.8",
  "1128.3,761 1576.7,433",
  "1187.7,832.8 1428.3,720.2 1493.6,877.2",
];
const ringed = [[837.8, 354.6], [597.9, 452.9], [977.9, 385], [951.9, 682.9], [652.6, 785.7], [835.5, 843.9], [1028.7, 488], [1277.7, 506], [1320, 796]];
const plain = [[734.9, 367.9], [897.9, 449.6], [1135, 404]];

const MapView = () => (
  <Svg viewBox="186 200 1733 803" preserveAspectRatio="xMidYMid slice" role="img" aria-label="地図">
    <defs>
      <radialGradient id="rdbu" cx="0" cy="0" r="1.414">
        <stop offset="0" stopColor="#ca0020" /><stop offset=".25" stopColor="#f4a582" /><stop offset=".5" stopColor="#f7f7f7" /><stop offset=".75" stopColor="#92c5de" /><stop offset="1" stopColor="#0571b0" />
      </radialGradient>
      <radialGradient id="spectrum" cx="0" cy="0" r="1.3">
        <stop offset="0" stopColor="#3b3ba8" /><stop offset=".25" stopColor="#2fb5f0" /><stop offset=".45" stopColor="#6bf06b" /><stop offset=".65" stopColor="#f5e12c" /><stop offset="1" stopColor="#e03a12" />
      </radialGradient>
    </defs>
    {polygons.map((p) => <polygon key={p} points={p} fill="url(#rdbu)" stroke="#120818" strokeWidth="1.200" strokeLinejoin="round" />)}
    <polygon points="764.3,647.5 859.6,766.8 803,781.1 712.7,707.1" fill="#ffff00" stroke="#111" strokeWidth="1.200" />
    <g fill="none" strokeLinecap="round" strokeLinejoin="round">
      {lines.map((p) => <polyline key={p} points={p} stroke="#102a30" strokeWidth="7.600" />)}
      {lines.map((p) => <polyline key={p} points={p} stroke="#3fd9f8" strokeWidth="5.400" />)}
    </g>
    {ringed.map(([x, y]) => <circle key={x} cx={x} cy={y} r="10.300" fill="#fdf6f4" stroke="#111" strokeWidth="1.300" />)}
    {[...ringed, ...plain].map(([x, y]) => <circle key={x} cx={x} cy={y} r="7.800" fill="#db1e2a" stroke="#8f1a20" strokeWidth=".8" />)}
  </Svg>
);

/* ---------- status bar ---------- */
const Status = styled.footer`
  display: flex;
  align-items: center;
  height: 29px;
  padding: 0 6px 0 4px;
  border-top: 1px solid #b3b3b3;
  color: #000;
  font: 10px/16px "Liberation Sans", "Noto Sans CJK JP", sans-serif;
`;
const Search = styled(Field)`
  align-items: center;
  margin-right: auto;
  padding-left: 8px;
  gap: 4px;
  font-size: 11px;
`;
const Group = styled.div<{ $gap?: number }>`
  display: flex;
  align-items: center;
  gap: 5px;
  margin-left: ${(p) => p.$gap ?? 8}px;
  label { white-space: nowrap; }
`;
const FlatButton = styled.button`
  display: flex;
  align-items: center;
  padding: 0;
  border: 0;
  background: none;
`;

const menus: [string, string, number][] = [
  ["プロジェクト", "J", 78], ["編集", "E", 52], ["ビュー", "V", 53], ["レイヤ", "L", 56], ["設定", "S", 51], ["プラグイン", "P", 72], ["ベクタ", "O", 59],
  ["ラスタ", "R", 54], ["データベース", "D", 84], ["Web", "W", 57], ["メッシュ", "M", 67], ["プロセシング", "C", 84], ["ヘルプ", "H", 62],
];

export default function App() {
  return (
    <Screen>
      <Global />
      <Frame>
        <TitleBar>
          <Svg width="16" height="16" viewBox="0 0 16 16" aria-hidden="true">
            <circle cx="8" cy="7.500" r="5.500" fill="none" stroke="#5f9f2f" strokeWidth="3.600" />
            <path d="M8 7.500l6.500 7" stroke="#8cc63f" strokeWidth="3" /><path d="M7 6.500h3.500l-1 3z" fill="#ee7913" />
          </Svg>
          <WindowTitle>*和集合 — QGIS</WindowTitle>
          <WindowButton aria-label="最小化"><Svg width="10" height="10" viewBox="0 0 10 10"><path d="M0 5.500h10" stroke="#111" /></Svg></WindowButton>
          <WindowButton aria-label="元に戻す"><Svg width="10" height="10" viewBox="0 0 10 10"><rect x=".5" y="2.500" width="7" height="7" rx="1" fill="none" stroke="#111" /><path d="M2.500.5h5q2 0 2 2v5" fill="none" stroke="#111" /></Svg></WindowButton>
          <WindowButton aria-label="閉じる"><Svg width="10" height="10" viewBox="0 0 10 10"><path d="M0 0l10 10M10 0L0 10" stroke="#111" /></Svg></WindowButton>
        </TitleBar>
        <MenuBar>
          {menus.map(([name, key, w]) => <MenuItem key={name} $w={w}>{name}(<u>{key}</u>)</MenuItem>)}
        </MenuBar>
        <ToolRow><Tools items={fileTools} /></ToolRow>
        <ToolRow><Tools items={layerTools} /></ToolRow>
        <ToolRow>
          <Tools items={editTools} />
          <SnapFields>
            <Field $w={83} $off><TextInput type="number" aria-label="許容範囲" defaultValue={12} disabled /><Steps /></Field>
            <Field $w={84} $h={22} $off>
              <Select aria-label="単位" disabled><option>px</option></Select>
              <SelectArrow><Caret c="#888" /></SelectArrow>
            </Field>
          </SnapFields>
          <Tools items={snapTools} />
        </ToolRow>
        <ToolRow $last><Tools items={shapeTools} /></ToolRow>

        <Main>
          <Side>
            <DockHead title="ブラウザ" />
            <DockTools>
              {[["addLayer", "追加"], ["refresh", "再読み込み"], ["filter", "フィルタ"], ["collapse", "折りたたむ"], ["info", "情報"]].map(([i, t]) => (
                <SmallTool key={i} aria-label={t}><Icon name={i} size={15} /></SmallTool>
              ))}
            </DockTools>
            <Browser>
              <List>
                {places.map(([icon, name, open]) => (
                  <Item key={icon}>
                    <Tri d={open ? "M0 0l4 4-4 4z" : ""} />
                    <Icon name={icon} size={16} />
                    {name}
                  </Item>
                ))}
              </List>
              <Bar $dir="column">
                <BarButton aria-label="上へ"><Tri d="M0 6h8L4 2z" /></BarButton>
                <Thumb $grow={54} /><Rest $grow={68} />
                <BarButton aria-label="下へ"><Tri d="M0 2h8L4 6z" /></BarButton>
              </Bar>
              <Bar $dir="row">
                <BarButton aria-label="左へ"><Tri d="M6 0v8L2 4z" /></BarButton>
                <Thumb $grow={124} /><Rest $grow={11} />
                <BarButton aria-label="右へ"><Tri d="M2 0v8l4-4z" /></BarButton>
              </Bar>
              <Corner />
            </Browser>
            <Splitter />
            <DockHead title="レイヤ" />
            <DockTools>
              {[["brush", "スタイル"], ["group", "グループ追加"], ["eye", "テーマ"], ["filterMini", "凡例フィルタ"]].map(([i, t]) => (
                <SmallTool key={i} aria-label={t}><Icon name={i} size={15} /></SmallTool>
              ))}
              <SmallTool $wide aria-label="式フィルタ"><Icon name="epsilon" size={15} /><Caret /></SmallTool>
              <More aria-label="その他">»</More>
            </DockTools>
            <Layers>
              <List>
                {layers.map((l, n) => (
                  <LayerRow key={n} $off={l.off} $current={l.current} $full={l.chip}>
                    <Check id={`layer-${n}`} defaultChecked={!l.off} />
                    <label htmlFor={`layer-${n}`}><Swatch kind={l.kind} />{l.name}</label>
                    {l.chip && <Chip aria-label="一時スクラッチレイヤ"><Icon name="chip" size={14} /></Chip>}
                  </LayerRow>
                ))}
              </List>
            </Layers>
          </Side>
          <Canvas><MapView /></Canvas>
        </Main>

        <Status>
          <Search $w={200} $h={22}>
            <Svg width="12" height="12" viewBox="0 0 12 12" aria-hidden="true"><circle cx="5" cy="5" r="4" fill="none" stroke="#777" strokeWidth="1.300" /><path d="M8 8l4 4" stroke="#777" strokeWidth="1.500" /></Svg>
            <TextInput aria-label="検索" placeholder="検索(Ctrl + K)" />
          </Search>
          <Group>
            <label htmlFor="coord">座標</label>
            <Field $w={107}><TextInput id="coord" defaultValue="10914151,4538616" /></Field>
            <FlatButton aria-label="範囲表示"><Icon name="mouse" size={16} /></FlatButton>
          </Group>
          <Group $gap={12}>
            <label htmlFor="scale">縮尺</label>
            <Field $w={80}><TextInput id="scale" defaultValue="188233840" /><DropButton aria-label="縮尺一覧"><Caret c="#666" /></DropButton></Field>
          </Group>
          <Group><FlatButton aria-label="縮尺を固定"><Icon name="lock" size={15} /></FlatButton></Group>
          <Group>
            <label htmlFor="zoom">拡大</label>
            <Field $w={84}><TextInput id="zoom" defaultValue="100%" /><Steps /></Field>
          </Group>
          <Group>
            <label htmlFor="turn">回転</label>
            <Field $w={84}><TextInput id="turn" defaultValue="0.0 °" /><Steps /></Field>
          </Group>
          <Group>
            <Check id="render" defaultChecked />
            <label htmlFor="render">レンダ</label>
          </Group>
          <Group $gap={16}><FlatButton><Icon name="crs" size={16} />EPSG:6678</FlatButton></Group>
          <Group $gap={24}><FlatButton aria-label="メッセージ"><Icon name="bubble" size={17} /></FlatButton></Group>
        </Status>
      </Frame>
      <ScreenEdge />
    </Screen>
  );
}
